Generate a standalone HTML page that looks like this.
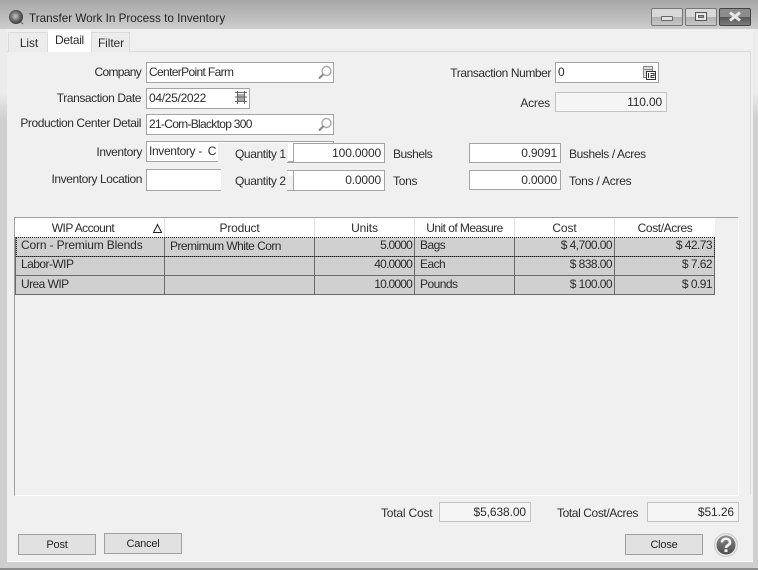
<!DOCTYPE html>
<html><head><meta charset="utf-8"><style>
html,body{margin:0;padding:0}
#w{position:relative;width:758px;height:570px;overflow:hidden;background:#cfcfcf;font-family:"Liberation Sans",sans-serif;font-size:12px;color:#2c2c2c}
#w div{position:absolute;box-sizing:border-box;white-space:nowrap}
.l{text-align:right;height:16px;line-height:16px;letter-spacing:-.42px}
.t{height:16px;line-height:16px;letter-spacing:-.4px}
.f{background:#fff;border:1px solid #a4a4a4;line-height:19px;padding:0 2px}
.r{text-align:right;padding-right:3px}
.n{letter-spacing:-.15px}
.ro{background:#f5f5f5;border:1px solid #c2c2c2}
.b{background:#e1e1e1;border:1px solid #a0a0a0;text-align:center;line-height:20px;color:#222;font-size:11px;letter-spacing:-.2px}
.h{background:#fff;top:218px;height:19px;line-height:21px;text-align:center;border-right:1px solid #e2e2e2;letter-spacing:-.4px}
.c{background:#d0d0d0;border-right:1px solid #6a6a6a;border-bottom:1px solid #6a6a6a;padding:0 2px 0 5px;color:#2a2a2a;letter-spacing:-.55px}
.r1{top:237px;height:20px;line-height:17px}
.r2{top:257px;height:19px;line-height:15px}
.r3{top:276px;height:19px;line-height:16px}
.fl{border-left:1px solid #6a6a6a}
</style></head><body><div id="w">
<div style="left:0;top:0;width:758px;height:29px;background:linear-gradient(#a6a6a6,#cdcdcd)"></div>
<div style="left:0;top:29px;width:7px;height:90px;background:linear-gradient(#ececec 70%,#cfcfcf)"></div>
<div style="left:752px;top:29px;width:6px;height:90px;background:linear-gradient(#ececec 70%,#cfcfcf)"></div>
<div style="left:7px;top:29px;width:746px;height:533px;background:#f0f0f0;border-bottom:1px solid #fff"></div>
<div style="left:0;top:568px;width:758px;height:2px;background:#8c8c8c"></div>
<svg style="position:absolute;left:8px;top:9px" width="18" height="18"><defs><radialGradient id="g" cx=".45" cy=".45" r=".6"><stop offset="0" stop-color="#c8c8c8"/><stop offset=".55" stop-color="#6a6a6a"/><stop offset="1" stop-color="#303030"/></radialGradient></defs><circle cx="8" cy="8" r="7" fill="url(#g)"/><path d="M13 13l2 2" stroke="#777" stroke-width="1.500"/></svg>
<div class="t" style="left:29px;top:10px;font-size:11.7px;letter-spacing:0;color:#222;line-height:17px">Transfer Work In Process to Inventory</div>

<div style="left:651px;top:8px;width:32px;height:18px;border:1px solid #777;border-radius:2px;background:linear-gradient(#d8d8d8 50%,#b0b0b0 50%,#c8c8c8)"></div>
<div style="left:661px;top:16px;width:12px;height:5px;background:#e0e0e0;border:1px solid #666;border-radius:1px"></div>
<div style="left:685px;top:8px;width:32px;height:18px;border:1px solid #777;border-radius:2px;background:linear-gradient(#d8d8d8 50%,#b0b0b0 50%,#c8c8c8)"></div>
<div style="left:695px;top:12px;width:12px;height:9px;background:#e4e4e4;border:1px solid #555"></div>
<div style="left:698px;top:15px;width:6px;height:3px;background:#999;border:1px solid #666"></div>
<div style="left:719px;top:8px;width:32px;height:18px;border:1px solid #444;border-radius:2px;background:linear-gradient(#8c8c8c 50%,#555 50%,#7c7c7c)"></div>
<svg style="position:absolute;left:728px;top:11px" width="14" height="11"><path d="M2 1.500l10 8M12 1.500l-10 8" stroke="#e8e8e8" stroke-width="3"/></svg>

<div style="left:7px;top:51px;width:744px;height:1px;background:#d8d8d8"></div>
<div style="left:750px;top:51px;width:1px;height:443px;background:#dcdcdc"></div>
<div style="left:8px;top:32px;width:40px;height:20px;background:#ececec;border:1px solid #dadada;border-bottom:0;line-height:21px;text-align:center;padding-left:2px;letter-spacing:-.1px">List</div>
<div style="left:48px;top:30px;width:43px;height:22px;background:#fff;line-height:21px;text-align:center;letter-spacing:-.3px">Detail</div>
<div style="left:91px;top:32px;width:39px;height:20px;background:#ececec;border:1px solid #dadada;border-bottom:0;line-height:21px;text-align:center;padding-left:1px;letter-spacing:-.1px">Filter</div>

<div class="l" style="left:40px;width:101px;top:64px;letter-spacing:-.7px">Company</div>
<div class="f" style="left:146px;top:62px;width:188px;height:21px;letter-spacing:-.65px">CenterPoint Farm</div>
<svg style="position:absolute;left:317px;top:65px" width="16" height="16"><circle cx="9.500" cy="6" r="4.500" fill="#fff" stroke="#aaa" stroke-width="1.400"/><path d="M6.500 9l-4.500 4.500" stroke="#888" stroke-width="2"/></svg>
<div class="l" style="left:20px;width:121px;top:90px">Transaction Date</div>
<div class="f" style="left:146px;top:88px;width:104px;height:21px;letter-spacing:-.3px">04/25/2022</div>
<svg style="position:absolute;left:234px;top:90px" width="14" height="15"><rect x="4" y="4" width="6" height="7" fill="#aaa"/><path d="M1 2.500h12M1 11.500h12M1 7h12M3.500 1v13M10.500 1v13" stroke="#666" fill="none"/></svg>
<div class="l" style="left:10px;width:131px;top:115px">Production Center Detail</div>
<div class="f" style="left:146px;top:114px;width:188px;height:21px;letter-spacing:-.7px">21-Corn-Blacktop 300</div>
<svg style="position:absolute;left:317px;top:117px" width="16" height="16"><circle cx="9.500" cy="6" r="4.500" fill="#fff" stroke="#aaa" stroke-width="1.400"/><path d="M6.500 9l-4.500 4.500" stroke="#888" stroke-width="2"/></svg>
<div class="l" style="left:60px;width:82px;top:144px">Inventory</div>
<div class="f" style="left:146px;top:141px;width:188px;height:21px;line-height:18px;letter-spacing:-.35px">Inventory -&nbsp; C</div>
<div class="l" style="left:20px;width:122px;top:171px">Inventory Location</div>
<div class="f" style="left:146px;top:169px;width:188px;height:22px"></div>
<div style="left:218px;top:143px;width:70px;height:20px;background:#f0f0f0"></div>
<div style="left:221px;top:163px;width:67px;height:30px;background:#f0f0f0"></div>
<div style="left:288px;top:162px;width:46px;height:8px;background:#f0f0f0"></div>
<div style="left:287px;top:176px;width:60px;height:15px;background:#f0f0f0"></div>
<div style="left:287px;top:162px;width:6px;height:1px;background:#a4a4a4"></div>
<div style="left:287px;top:190px;width:6px;height:1px;background:#a4a4a4"></div>
<div style="left:287px;top:170px;width:6px;height:1px;background:#a4a4a4"></div>
<div class="t" style="left:235px;top:146px">Quantity 1</div>
<div class="t" style="left:235px;top:173px">Quantity 2</div>
<div class="f r n" style="left:293px;top:143px;width:92px;height:20px">100.0000</div>
<div class="f r n" style="left:293px;top:170px;width:92px;height:21px">0.0000</div>
<div class="t" style="left:393px;top:146px;letter-spacing:-.5px">Bushels</div>
<div class="t" style="left:393px;top:173px;letter-spacing:-.3px">Tons</div>
<div class="f r n" style="left:469px;top:143px;width:92px;height:20px;line-height:18px">0.9091</div>
<div class="f r n" style="left:469px;top:170px;width:92px;height:20px;line-height:18px">0.0000</div>
<div class="t" style="left:569px;top:146px">Bushels / Acres</div>
<div class="t" style="left:569px;top:173px;letter-spacing:-.25px">Tons / Acres</div>
<div class="l" style="left:430px;width:121px;top:65px">Transaction Number</div>
<div class="f" style="left:555px;top:62px;width:104px;height:21px;line-height:18px">0</div>
<svg style="position:absolute;left:642px;top:65px" width="15" height="15"><rect x="1.500" y="1.500" width="9" height="11" fill="#dcdcdc" stroke="#888"/><path d="M2 4.500h8" stroke="#888"/><rect x="4.500" y="6.500" width="9" height="8" fill="#fff" stroke="#333"/><path d="M6.500 8v5M8.500 8.500h3.500v2h-3v2h3.500" stroke="#333" fill="none"/></svg>
<div class="l" style="left:480px;width:70px;top:95px;letter-spacing:-.2px">Acres</div>
<div class="f ro r" style="left:555px;top:92px;width:112px;height:20px;padding-right:4px;line-height:18px;letter-spacing:-.15px">110.00</div>

<div style="left:14px;top:217px;width:725px;height:279px;border:1px solid #a0a0a0;border-right:1px solid #fff;border-bottom:1px solid #fff"></div>
<div class="h" style="left:15px;width:150px;padding-right:13px;letter-spacing:-.55px">WIP Account</div>
<svg style="position:absolute;left:152px;top:223px" width="11" height="11"><path d="M5.500 1.500L9.500 9.500H1.500Z" fill="none" stroke="#222"/></svg>
<div class="h" style="left:165px;width:150px;letter-spacing:-.2px">Product</div>
<div class="h" style="left:315px;width:100px;letter-spacing:-.1px">Units</div>
<div class="h" style="left:415px;width:100px;letter-spacing:-.55px">Unit of Measure</div>
<div class="h" style="left:515px;width:100px;letter-spacing:-.1px">Cost</div>
<div class="h" style="left:615px;width:100px;border-right:0">Cost/Acres</div>

<div class="c fl r1" style="left:15px;width:150px;letter-spacing:-.15px">Corn - Premium Blends</div>
<div class="c r1" style="left:165px;width:150px;line-height:18px">Premimum White Corn</div>
<div class="c r r1" style="left:315px;width:100px;letter-spacing:-.8px">5.0000</div>
<div class="c r1" style="left:415px;width:100px">Bags</div>
<div class="c r r1" style="left:515px;width:100px">$ 4,700.00</div>
<div class="c r r1" style="left:615px;width:100px;padding-right:2px">$ 42.73</div>
<div style="left:16px;top:237px;width:699px;height:20px;border:1px dotted #222"></div>
<div class="c fl r2" style="left:15px;width:150px">Labor-WIP</div>
<div class="c r2" style="left:165px;width:150px"></div>
<div class="c r r2" style="left:315px;width:100px;letter-spacing:-.8px">40.0000</div>
<div class="c r2" style="left:415px;width:100px">Each</div>
<div class="c r r2" style="left:515px;width:100px">$ 838.00</div>
<div class="c r r2" style="left:615px;width:100px">$ 7.62</div>
<div class="c fl r3" style="left:15px;width:150px">Urea WIP</div>
<div class="c r3" style="left:165px;width:150px"></div>
<div class="c r r3" style="left:315px;width:100px;letter-spacing:-.8px">10.0000</div>
<div class="c r3" style="left:415px;width:100px">Pounds</div>
<div class="c r r3" style="left:515px;width:100px">$ 100.00</div>
<div class="c r r3" style="left:615px;width:100px">$ 0.91</div>

<div class="t" style="left:381px;top:505px;letter-spacing:-.2px">Total Cost</div>
<div class="f ro r" style="left:439px;top:502px;width:92px;height:20px;padding-right:4px;line-height:18px;letter-spacing:-.1px">$5,638.00</div>
<div class="t" style="left:557px;top:505px">Total Cost/Acres</div>
<div class="f ro r" style="left:647px;top:502px;width:92px;height:20px;padding-right:4px;line-height:18px;letter-spacing:-.1px">$51.26</div>
<div class="b" style="left:18px;top:534px;width:78px;height:21px">Post</div>
<div class="b" style="left:104px;top:533px;width:78px;height:21px">Cancel</div>
<div class="b" style="left:625px;top:534px;width:78px;height:21px">Close</div>
<svg style="position:absolute;left:714px;top:533px" width="24" height="24"><defs><linearGradient id="q" x1="0" y1="0" x2="0" y2="1"><stop offset="0" stop-color="#8a8a8a"/><stop offset="1" stop-color="#4c4c4c"/></linearGradient></defs><circle cx="12" cy="12" r="11.500" fill="#e8e8e8" stroke="#ccc"/><circle cx="12" cy="12" r="9.500" fill="url(#q)"/><path d="M8 9.500c0-5 8-5 8 0 0 3-4 2.500-4 5.500" fill="none" stroke="#f4f4f4" stroke-width="2.600"/><rect x="10.500" y="16.300" width="3" height="2.800" fill="#f4f4f4"/></svg>
</div></body></html>
